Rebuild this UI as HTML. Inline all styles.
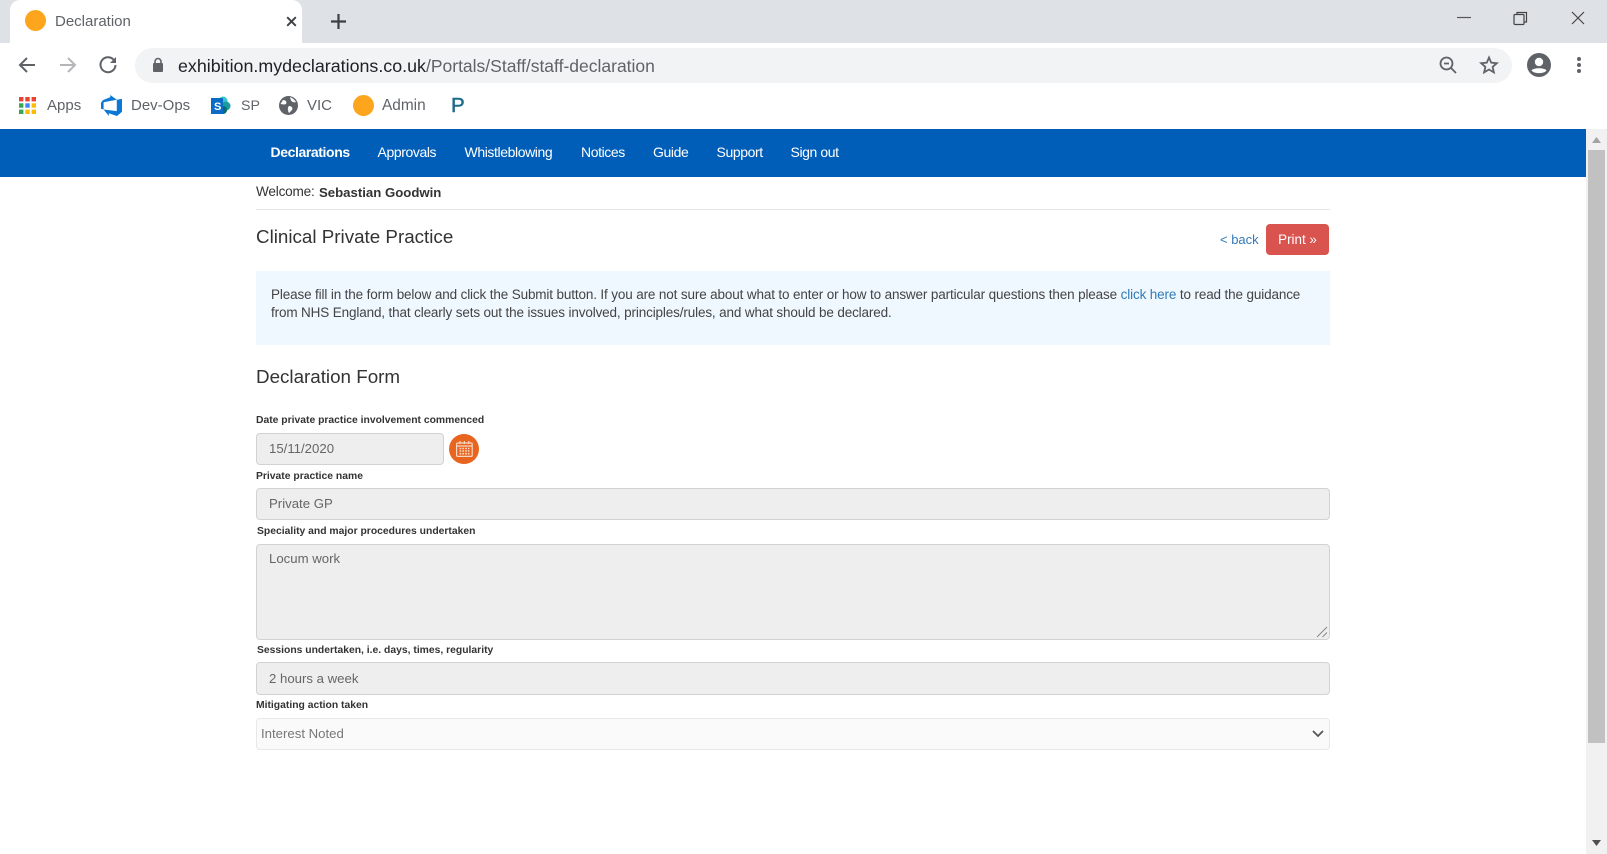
<!DOCTYPE html>
<html><head><meta charset="utf-8"><title>Declaration</title>
<style>
html,body{margin:0;padding:0;width:1607px;height:854px;overflow:hidden;background:#fff;font-family:"Liberation Sans",sans-serif;}
body{filter:blur(.35px);}
.a{position:absolute;white-space:nowrap;}
svg{position:absolute;overflow:visible;}
.bm{font-size:15px;color:#5f6368;top:97px;line-height:18px;}
.nav{font-size:14px;color:#fff;top:143px;line-height:18px;letter-spacing:-.4px;}
.lb{font-size:10.35px;font-weight:bold;color:#333;line-height:14px;left:257px;}
.in{box-sizing:border-box;background:#eee;border:1.5px solid #d2d2d2;border-radius:4px;left:256px;width:1074px;color:#666;font-size:13.2px;padding-left:12px;}
h3{position:absolute;margin:0;font-weight:normal;font-size:18.8px;color:#333;line-height:24px;white-space:nowrap;}
</style></head><body>
<div class="a" style="left:0;top:0;width:1607px;height:43px;background:#dee1e6"></div>
<div class="a" style="left:10px;top:0;width:292px;height:43px;background:#fff;border-radius:10px 10px 0 0"></div>
<div class="a" style="left:0;top:43px;width:1607px;height:86px;background:#fff"></div>
<div class="a" style="left:25px;top:10px;width:21px;height:21px;border-radius:50%;background:#fda61d"></div>
<div class="a" style="left:55px;top:12.5px;font-size:15px;line-height:18px;color:#5f6368">Declaration</div>
<svg style="left:286px;top:16px" width="11" height="11"><path d="M1.2 1.2L9.8 9.8M9.8 1.2L1.2 9.8" stroke="#3c4043" stroke-width="1.9"/></svg>
<svg style="left:331px;top:14px" width="15" height="15"><path d="M7.5 0V15M0 7.5H15" stroke="#3c4043" stroke-width="2.2"/></svg>
<svg style="left:1457px;top:12px" width="15" height="10"><path d="M0 5.5H14" stroke="#555" stroke-width="1.2"/></svg>
<svg style="left:1513px;top:11px" width="15" height="15" fill="none" stroke="#444" stroke-width="1.2"><rect x="1" y="3.5" width="10" height="10" rx="1"/><path d="M4 3.5V1.5H13.5V11H11"/></svg>
<svg style="left:1571px;top:11px" width="14" height="14"><path d="M1 1L13 13M13 1L1 13" stroke="#444" stroke-width="1.2"/></svg>

<svg style="left:18px;top:56px" width="18" height="18" fill="none" stroke="#5f6368" stroke-width="2"><path d="M17 9H2M9 2L2 9L9 16"/></svg>
<svg style="left:59px;top:56px" width="18" height="18" fill="none" stroke="#b4b6b9" stroke-width="2"><path d="M1 9H16M9 2L16 9L9 16"/></svg>
<svg style="left:99px;top:56px" width="18" height="18" fill="none" stroke="#5f6368" stroke-width="2"><path d="M15.5 5A7.5 7.5 0 1 0 16.5 9"/><path d="M17 1V7H11" fill="#5f6368" stroke="none"/></svg>
<div class="a" style="left:135px;top:48px;width:1377px;height:35px;border-radius:18px;background:#f1f3f4"></div>
<svg style="left:152px;top:58px" width="12" height="14"><rect x="1" y="5" width="10" height="9" rx="1" fill="#5f6368"/><path d="M3 6V3.5A3 3 0 0 1 9 3.5V6" fill="none" stroke="#5f6368" stroke-width="1.6"/></svg>
<div class="a" id="url" style="left:178px;top:55px;font-size:17.85px;line-height:23px;color:#202124">exhibition.mydeclarations.co.uk<span style="color:#5f6368;font-size:17.5px">/Portals/Staff/staff-declaration</span></div>
<svg style="left:1439px;top:56px" width="18" height="18" fill="none" stroke="#5f6368" stroke-width="1.8"><circle cx="7.5" cy="7.5" r="6"/><path d="M12 12L17 17M5 7.5H10"/></svg>
<svg style="left:1480px;top:56px" width="18" height="18" fill="none" stroke="#5f6368" stroke-width="1.8"><path d="M9 1.5L11.2 6.7L16.8 7.2L12.6 10.9L13.9 16.4L9 13.5L4.1 16.4L5.4 10.9L1.2 7.2L6.8 6.7Z"/></svg>
<svg style="left:1527px;top:53px" width="24" height="24"><circle cx="12" cy="12" r="12" fill="#5f6368"/><circle cx="12" cy="9" r="4.2" fill="#fff"/><path d="M4.5 17.5C6 14.5 18 14.5 19.5 17.5C17 21 7 21 4.5 17.5Z" fill="#fff"/></svg>
<svg style="left:1577px;top:57px" width="4" height="16" fill="#5f6368"><circle cx="2" cy="2" r="2"/><circle cx="2" cy="8" r="2"/><circle cx="2" cy="14" r="2"/></svg>

<svg style="left:19px;top:97px" width="17" height="17"><g><rect width="4.4" height="4.4" fill="#ea4335"/><rect x="6.3" width="4.4" height="4.4" fill="#ea4335"/><rect x="12.6" width="4.4" height="4.4" fill="#ea4335"/><rect y="6.3" width="4.4" height="4.4" fill="#34a853"/><rect x="6.3" y="6.3" width="4.4" height="4.4" fill="#4285f4"/><rect x="12.6" y="6.3" width="4.4" height="4.4" fill="#fbbc05"/><rect y="12.6" width="4.4" height="4.4" fill="#34a853"/><rect x="6.3" y="12.6" width="4.4" height="4.4" fill="#fbbc05"/><rect x="12.6" y="12.6" width="4.4" height="4.4" fill="#fbbc05"/></g></svg>
<div class="a bm" style="left:47px">Apps</div>
<svg style="left:101px;top:95px" width="21" height="21" viewBox="0 0 24 24"><path d="M0 8.877L2.247 5.91l8.405-3.416V.022l7.37 5.393L2.966 8.338v8.225L0 15.707zm24-4.45v14.651l-5.753 4.9-9.303-3.057v3.056l-5.978-7.416 15.057 1.798V5.415z" fill="#0a78d4"/></svg>
<div class="a bm" style="left:131px">Dev-Ops</div>
<svg style="left:211px;top:96px" width="21" height="19"><circle cx="12" cy="5" r="4.5" fill="#37c6d0"/><circle cx="15" cy="10" r="4.5" fill="#1a9ba1"/><circle cx="12" cy="14" r="4" fill="#036c70"/><rect y="2" width="12" height="16" fill="#0a6cc4"/><text x="3" y="14" font-size="11" font-weight="bold" fill="#fff" font-family="Liberation Sans">S</text></svg>
<div class="a bm" style="left:241px;font-size:14.2px">SP</div>
<svg style="left:279px;top:96px" width="19" height="19"><circle cx="9.5" cy="9.5" r="9.5" fill="#5f6368"/><path d="M4 4C7 4 8 6 7 8C5 9 3 8 1.5 8ZM10 10C13 10 14 12 13 14L10 17C9 15 8 12 10 10ZM11 1C13 2 15 3 17 6C14 7 12 6 11 1Z" fill="#fff"/></svg>
<div class="a bm" style="left:307px">VIC</div>
<div class="a" style="left:353px;top:95px;width:21px;height:21px;border-radius:50%;background:#fda61d"></div>
<div class="a bm" style="left:382px;font-size:15.4px">Admin</div>
<div class="a" style="left:451px;top:94px;font-size:20.5px;line-height:24px;color:#1d6a8a;-webkit-text-stroke:.5px #1d6a8a">P</div>

<div class="a" style="left:0;top:129px;width:1586px;height:48px;background:#005eb8"></div>
<div class="a nav" style="left:270.5px;font-weight:bold">Declarations</div>
<div class="a nav" style="left:377.5px">Approvals</div>
<div class="a nav" style="left:464.5px">Whistleblowing</div>
<div class="a nav" style="left:581px">Notices</div>
<div class="a nav" style="left:653px">Guide</div>
<div class="a nav" style="left:716.5px">Support</div>
<div class="a nav" style="left:790.5px">Sign out</div>

<div class="a" style="left:1586px;top:129px;width:21px;height:725px;background:#f1f1f1"></div>
<div class="a" style="left:1588px;top:150px;width:17px;height:593px;background:#c1c1c1"></div>
<svg style="left:1592px;top:137px" width="9" height="6"><path d="M4.5 0L9 6H0Z" fill="#a3a3a3"/></svg>
<svg style="left:1592px;top:840px" width="9" height="6"><path d="M0 0H9L4.5 6Z" fill="#505050"/></svg>

<div class="a" style="left:256px;top:183px;font-size:13.6px;line-height:18px;color:#333;letter-spacing:-.2px">Welcome:</div>
<div class="a" style="left:319px;top:183.5px;font-size:13.2px;line-height:18px;color:#333;font-weight:bold">Sebastian Goodwin</div>
<div class="a" style="left:256px;top:209px;width:1074px;height:1px;background:#e6e6e6"></div>
<h3 style="left:256px;top:225px">Clinical Private Practice</h3>
<div class="a" style="left:1220px;top:231px;font-size:13px;line-height:18px;color:#337ab7">&lt; back</div>
<div class="a" style="left:1266px;top:224px;width:63px;height:31px;background:#d9534f;border-radius:4px;color:#fff;font-size:13.4px;line-height:31px;text-align:center">Print »</div>
<div class="a" style="left:256px;top:271px;width:1074px;height:74px;background:#eff7ff"></div>
<div class="a" style="left:271px;top:285.5px;font-size:13.5px;line-height:18.5px;color:#444;letter-spacing:-.14px">Please fill in the form below and click the Submit button. If you are not sure about what to enter or how to answer particular questions then please <span style="color:#337ab7">click here</span> to read the guidance<br>from NHS England, that clearly sets out the issues involved, principles/rules, and what should be declared.</div>
<h3 style="left:256px;top:365px">Declaration Form</h3>

<div class="a lb" style="top:414px;left:256px">Date private practice involvement commenced</div>
<div class="a in" style="top:433px;width:188px;height:32px;line-height:29.5px">15/11/2020</div>
<div class="a" style="left:449px;top:434px;width:30px;height:30px;border-radius:50%;background:#e8651f"></div>
<svg style="left:456px;top:441px" width="17" height="16" fill="none" stroke="#f9d6c2" stroke-width="1.2"><rect x=".6" y="2" width="15.6" height="13.4" rx="1"/><path d="M4 0V3M8.4 0V3M12.8 0V3M.6 5H16"/><path d="M3.5 7.5H13.5M3.5 10H13.5M3.5 12.7H13.5" stroke-dasharray="1.8 1" stroke-width="1.6"/></svg>
<div class="a lb" style="top:470px;left:256px">Private practice name</div>
<div class="a in" style="top:488px;height:32px;line-height:29px">Private GP</div>
<div class="a lb" style="top:524.5px">Speciality and major procedures undertaken</div>
<div class="a in" style="top:544px;height:96px;line-height:28px">Locum work</div>
<svg style="left:1316px;top:626px" width="12" height="12" fill="none" stroke="#888" stroke-width="1"><path d="M1 11L11 1M6.5 11L11 6.5"/></svg>
<div class="a lb" style="top:644px;left:257px">Sessions undertaken, i.e. days, times, regularity</div>
<div class="a in" style="top:662px;height:33px;line-height:31px">2 hours a week</div>
<div class="a lb" style="top:699px;left:256px">Mitigating action taken</div>
<div class="a in" style="top:718px;height:32px;line-height:29px;background:#fafafa;border-color:#e8e8e8;padding-left:4px;color:#777">Interest Noted</div>
<svg style="left:1312px;top:730px" width="12" height="8" fill="none" stroke="#555" stroke-width="1.8"><path d="M1 1L6 6L11 1"/></svg>
</body></html>
